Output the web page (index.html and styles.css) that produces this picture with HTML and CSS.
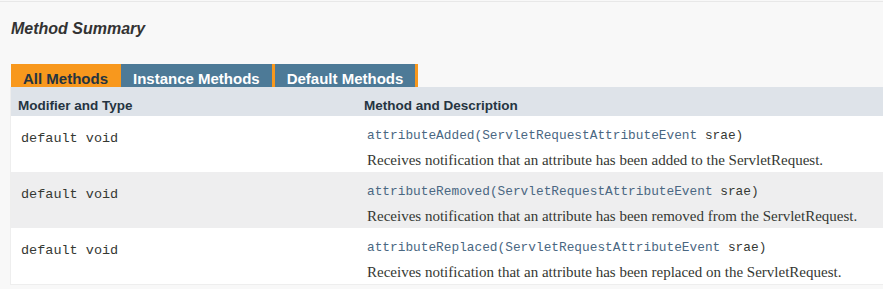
FILE: index.html
```html
<!DOCTYPE html>
<html>
<head>
<meta charset="utf-8">
<link rel="stylesheet" href="styles.css">
</head>
<body>
<div class="page">
  <h3 class="title">Method Summary</h3>
  <div class="tabs">
    <span class="tab active">All Methods</span>
    <span class="tab">Instance Methods</span>
    <span class="tab">Default Methods</span>
  </div>
  <div class="table">
    <div class="row head">
      <div class="c1">Modifier and Type</div>
      <div class="c2">Method and Description</div>
    </div>
    <div class="row">
      <div class="c1"><code class="type">default void</code></div>
      <div class="c2">
        <div class="sig"><span class="link">attributeAdded</span><span class="link">(ServletRequestAttributeEvent</span>&nbsp;srae)</div>
        <div class="desc">Receives notification that an attribute has been added to the ServletRequest.</div>
      </div>
    </div>
    <div class="row alt">
      <div class="c1"><code class="type">default void</code></div>
      <div class="c2">
        <div class="sig"><span class="link">attributeRemoved</span><span class="link">(ServletRequestAttributeEvent</span>&nbsp;srae)</div>
        <div class="desc">Receives notification that an attribute has been removed from the ServletRequest.</div>
      </div>
    </div>
    <div class="row">
      <div class="c1"><code class="type">default void</code></div>
      <div class="c2">
        <div class="sig"><span class="link">attributeReplaced</span><span class="link">(ServletRequestAttributeEvent</span>&nbsp;srae)</div>
        <div class="desc">Receives notification that an attribute has been replaced on the ServletRequest.</div>
      </div>
    </div>
  </div>
</div>
</body>
</html>
```
FILE: styles.css
```css
html, body {
  margin: 0;
  padding: 0;
  background: #f8f8f8;
}
body {
  padding-top: 1px;
  font-family: "Liberation Sans", Arial, sans-serif;
  color: #353833;
  overflow: hidden;
}
.page {
  border-top: 1px solid #e8e8e8;
  padding-left: 10px;
  width: 900px;
}
.title {
  margin: 0;
  padding: 17px 0 0 1px;
  font-size: 16px;
  line-height: 20px;
  font-style: italic;
  font-weight: bold;
  color: #333333;
}
.tabs {
  display: flex;
  margin-top: 25px;
  padding-left: 1px;
  height: 23px;
}
.tab {
  display: block;
  box-sizing: border-box;
  height: 23px;
  padding: 6px 12px 0 12px;
  font-size: 15px;
  line-height: 18px;
  font-weight: bold;
  background: #4d7a97;
  color: #ffffff;
  border-right: 3px solid #f8981d;
  white-space: nowrap;
}
.tab.active {
  background: #f8981d;
  color: #253441;
  border-right: 0;
  width: 110px;
}
.table {
  border-left: 1px solid #eeeeee;
  border-bottom: 1px solid #eeeeee;
}
.row {
  display: grid;
  grid-template-columns: 346px 1fr;
  height: 56px;
  background: #ffffff;
}
.row.alt {
  background: #eeeeef;
}
.row.head {
  height: 29px;
  background: #dee3e9;
  font-size: 13.5px;
  font-weight: bold;
  line-height: 16px;
  color: #253441;
}
.row.head .c1, .row.head .c2 {
  padding: 11px 0 0 7px;
}
.row .c1, .row .c2 {
  padding: 12px 0 0 10px;
  white-space: nowrap;
}
.type {
  font-family: "Liberation Mono", "Courier New", monospace;
  font-size: 13.5px;
  line-height: 16px;
  color: #353833;
}
.sig {
  font-family: "Liberation Mono", "Courier New", monospace;
  font-size: 12.8px;
  line-height: 16px;
  color: #353833;
}
.link {
  color: #4a6782;
}
.desc {
  margin-top: 7px;
  font-family: "Liberation Serif", "Times New Roman", serif;
  font-size: 15px;
  line-height: 18px;
  color: #353833;
}
```
